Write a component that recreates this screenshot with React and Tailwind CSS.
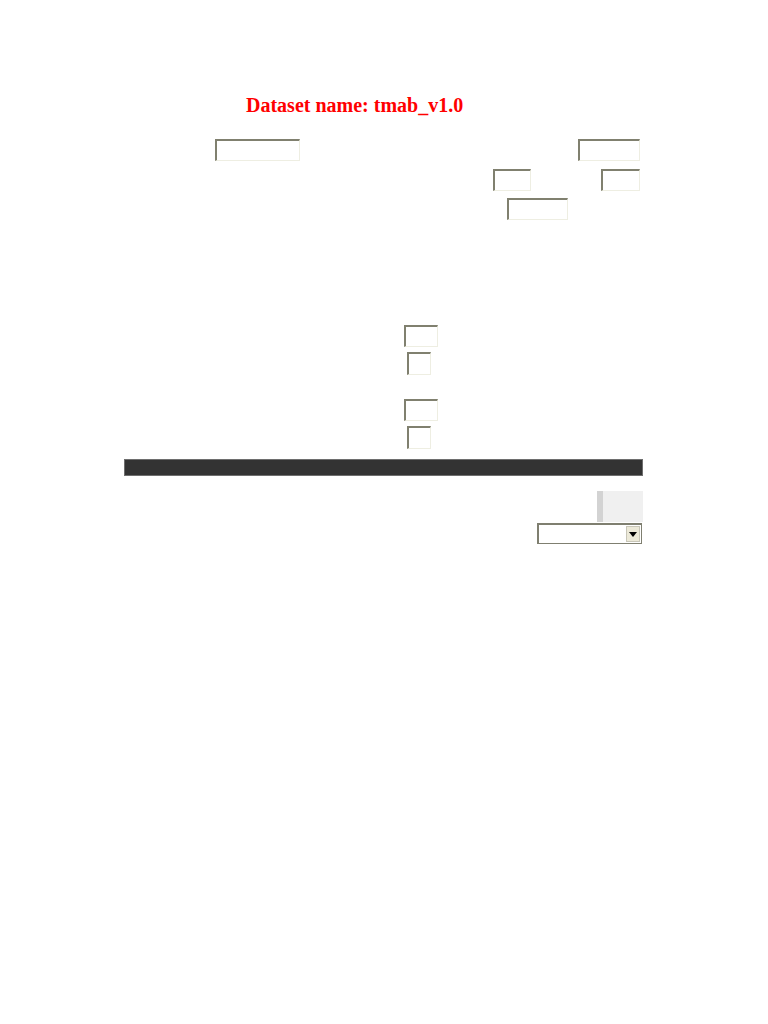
import React from 'react';

function Field({ className }) {
  return (
    <input
      type="text"
      className={`block bg-white border-t-2 border-l-2 border-r border-b border-t-[#80806f] border-l-[#80806f] border-r-[#eeeee2] border-b-[#eeeee2] outline-none ${className}`}
    />
  );
}

export default function App() {
  return (
    <div className="min-h-[1024px] bg-white" style={{ fontFamily: '"Liberation Serif", serif' }}>
      <div className="mx-auto w-[520px] pt-[92px] flex flex-col">
        <div className="pl-[122px] h-[26px] leading-[26px] text-[20px] font-bold text-[#ff0000]">
          Dataset name: tmab_v1.0
        </div>

        <div className="mt-[21px] flex">
          <Field className="ml-[91px] w-[85px] h-[22px]" />
          <Field className="ml-[278px] w-[62px] h-[22px]" />
        </div>

        <div className="mt-[8px] flex">
          <Field className="ml-[369px] w-[38px] h-[22px]" />
          <Field className="ml-[70px] w-[39px] h-[22px]" />
        </div>

        <div className="mt-[7px] flex">
          <Field className="ml-[383px] w-[61px] h-[22px]" />
        </div>

        <div className="mt-[105px] flex flex-col">
          <Field className="ml-[280px] w-[34px] h-[22px]" />
          <Field className="mt-[5px] ml-[283px] w-[24px] h-[23px]" />
          <Field className="mt-[24px] ml-[280px] w-[34px] h-[22px]" />
          <Field className="mt-[5px] ml-[283px] w-[24px] h-[23px]" />
        </div>

        <div className="mt-[10px] h-[17px] w-[519px] bg-[#333333] border border-[#6e6e6e]" />

        <div className="mt-[15px] flex justify-end pr-[1px]">
          <div className="flex h-[31px] w-[46px]">
            <div className="w-[6px] bg-[#d3d3d3]" />
            <div className="flex-1 bg-[#f0f0f0]" />
          </div>
        </div>

        <div className="mt-[1px] flex justify-end pr-[2px]">
          <div className="flex h-[21px] w-[105px] bg-white border border-[#7f7f70] border-t-2 border-l-2">
            <div className="flex-1" />
            <div className="w-[14px] my-[1px] mr-[1px] bg-[#ece9d8] border border-[#c8c6b8] flex items-center justify-center">
              <svg width="8" height="5" viewBox="0 0 8 5">
                <path d="M0 0h8L4 5z" fill="#000" />
              </svg>
            </div>
          </div>
        </div>
      </div>
    </div>
  );
}
